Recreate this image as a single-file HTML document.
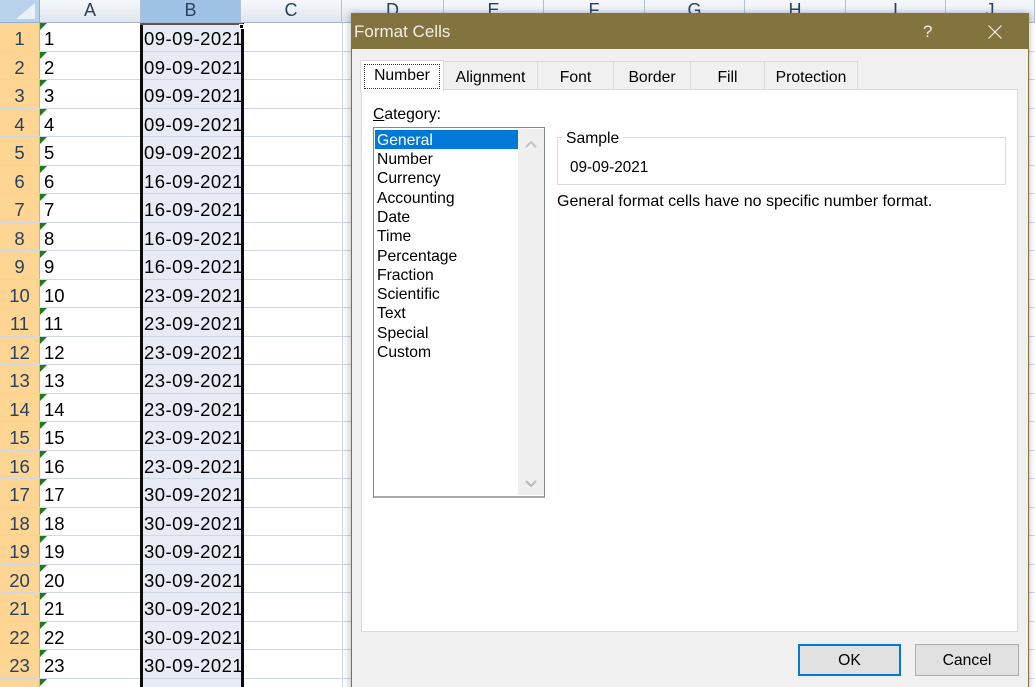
<!DOCTYPE html>
<html><head><meta charset="utf-8">
<style>
html,body{margin:0;padding:0;width:1035px;height:687px;overflow:hidden}
body{position:relative;background:#fff;font-family:"Liberation Sans",sans-serif;color:#000}
div{box-sizing:border-box}
#page{position:absolute;left:0;top:0;width:1035px;height:687px;overflow:hidden;background:#fff}
.abs,.t{position:absolute}
.t{white-space:nowrap;line-height:20px}
#corner{position:absolute;left:0;top:0;width:40px;height:23px;background:#b9d2ec;border-right:1px solid #8fb0d4;border-bottom:1px solid #8fb0d4}
.ch{position:absolute;top:0;height:23px;background:linear-gradient(#f6f8fb,#dfe5ee);border-right:1px solid #b3c0d2;border-bottom:1px solid #a6b5c9;text-align:center;font-size:18px;line-height:21px;color:#27415f}
#rows{position:absolute;left:0;top:23px;width:1035px}
.r{position:relative;height:28.52px;border-bottom:1px solid #d0d7e5;font-size:18.5px;line-height:32px;overflow:hidden}
.h{position:absolute;left:0;top:0;bottom:0;width:40px;background:#fed593;border-right:1px solid #f0a94e;text-align:center;color:#27415f;box-shadow:0 1px 0 #f0a94e}
.r::before{content:"";position:absolute;left:40px;top:0;border-top:7px solid #1e7b1e;border-right:7px solid transparent}
.a{position:absolute;left:44px;top:0;color:#000}
.b{position:absolute;left:141px;top:0;bottom:0;width:101px;background:#e8ebf6;padding-left:3px;letter-spacing:.45px;white-space:nowrap;overflow:visible}
.c{position:absolute;left:342px;top:0;bottom:0;border-left:1px solid #d0d7e5}
.vb{position:absolute;top:23px;width:3px;height:664px;background:#0c0c0c}
#dlg{position:absolute;left:351px;top:13px;width:678px;height:680px;background:#f0f0f0;border:1px solid #82733f;box-shadow:-2px 0 6px rgba(90,90,90,.3),2px 0 4px rgba(90,90,90,.2)}
#title{position:absolute;left:0;top:0;width:100%;height:35px;background:#82733f}
.tab{position:absolute;top:47px;height:30px;background:#f0f0f0;border:1px solid #dadada;border-bottom:none;text-align:center;font-size:15.7px;line-height:31px}
#panel{position:absolute;left:9px;top:75px;width:657px;height:543px;background:#fff;border:1px solid #dadada}
.li{position:absolute;left:25px;font-size:15.7px;line-height:20px;white-space:nowrap}
.btn{position:absolute;background:#e1e1e1;text-align:center;font-size:15.7px}
</style></head>
<body>
<div id="page">
<div id="corner"><svg width="39" height="22" style="position:absolute;left:0;top:0"><polygon points="35,3 35,19 16,19" fill="#e9f0f8"/></svg></div>
<div class="ch" style="left:40px;width:101px">A</div>
<div class="ch" style="left:141px;width:100px;background:#9fc1e6">B</div>
<div class="ch" style="left:241px;width:101px">C</div>
<div class="ch" style="left:342px;width:102px">D</div>
<div class="ch" style="left:444px;width:100px">E</div>
<div class="ch" style="left:544px;width:101px">F</div>
<div class="ch" style="left:645px;width:100px">G</div>
<div class="ch" style="left:745px;width:101px">H</div>
<div class="ch" style="left:846px;width:100px">I</div>
<div class="ch" style="left:946px;width:89px">J</div>

<div id="rows">
<div class="r"><div class="h">1</div><div class="a">1</div><div class="b">09-09-2021</div><div class="c"></div></div>
<div class="r"><div class="h">2</div><div class="a">2</div><div class="b">09-09-2021</div><div class="c"></div></div>
<div class="r"><div class="h">3</div><div class="a">3</div><div class="b">09-09-2021</div><div class="c"></div></div>
<div class="r"><div class="h">4</div><div class="a">4</div><div class="b">09-09-2021</div><div class="c"></div></div>
<div class="r"><div class="h">5</div><div class="a">5</div><div class="b">09-09-2021</div><div class="c"></div></div>
<div class="r"><div class="h">6</div><div class="a">6</div><div class="b">16-09-2021</div><div class="c"></div></div>
<div class="r"><div class="h">7</div><div class="a">7</div><div class="b">16-09-2021</div><div class="c"></div></div>
<div class="r"><div class="h">8</div><div class="a">8</div><div class="b">16-09-2021</div><div class="c"></div></div>
<div class="r"><div class="h">9</div><div class="a">9</div><div class="b">16-09-2021</div><div class="c"></div></div>
<div class="r"><div class="h">10</div><div class="a">10</div><div class="b">23-09-2021</div><div class="c"></div></div>
<div class="r"><div class="h">11</div><div class="a">11</div><div class="b">23-09-2021</div><div class="c"></div></div>
<div class="r"><div class="h">12</div><div class="a">12</div><div class="b">23-09-2021</div><div class="c"></div></div>
<div class="r"><div class="h">13</div><div class="a">13</div><div class="b">23-09-2021</div><div class="c"></div></div>
<div class="r"><div class="h">14</div><div class="a">14</div><div class="b">23-09-2021</div><div class="c"></div></div>
<div class="r"><div class="h">15</div><div class="a">15</div><div class="b">23-09-2021</div><div class="c"></div></div>
<div class="r"><div class="h">16</div><div class="a">16</div><div class="b">23-09-2021</div><div class="c"></div></div>
<div class="r"><div class="h">17</div><div class="a">17</div><div class="b">30-09-2021</div><div class="c"></div></div>
<div class="r"><div class="h">18</div><div class="a">18</div><div class="b">30-09-2021</div><div class="c"></div></div>
<div class="r"><div class="h">19</div><div class="a">19</div><div class="b">30-09-2021</div><div class="c"></div></div>
<div class="r"><div class="h">20</div><div class="a">20</div><div class="b">30-09-2021</div><div class="c"></div></div>
<div class="r"><div class="h">21</div><div class="a">21</div><div class="b">30-09-2021</div><div class="c"></div></div>
<div class="r"><div class="h">22</div><div class="a">22</div><div class="b">30-09-2021</div><div class="c"></div></div>
<div class="r"><div class="h">23</div><div class="a">23</div><div class="b">30-09-2021</div><div class="c"></div></div>
<div class="r"><div class="h"></div><div class="b"></div><div class="c"></div></div>
</div>
<div class="vb" style="left:140px"></div>
<div class="vb" style="left:241px"></div>
<div class="abs" style="left:140px;top:23px;width:103px;height:2px;background:#555"></div>
<div class="abs" style="left:239px;top:24px;width:5px;height:5px;background:#000;border:1px solid #fff"></div>

<div id="dlg">
<div id="title"></div>
<div class="t" style="left:2px;top:8px;font-size:17px;color:#f1efe6">Format Cells</div>
<div class="t" style="left:571px;top:8px;font-size:17px;color:#f1efe6">?</div>
<svg class="abs" style="left:635px;top:10px" width="16" height="16"><path d="M1.5 1.5L14.5 14.5M14.5 1.5L1.5 14.5" stroke="#f4f2ea" stroke-width="1.1" fill="none"/></svg>

<div class="tab" style="left:91px;width:95px">Alignment</div>
<div class="tab" style="left:185px;width:77px">Font</div>
<div class="tab" style="left:261px;width:78px">Border</div>
<div class="tab" style="left:338px;width:75px">Fill</div>
<div class="tab" style="left:412px;width:94px">Protection</div>
<div id="panel"></div>
<div class="tab" style="left:8px;top:46px;width:84px;height:32px;background:#fff;z-index:2;line-height:30px"><div class="abs" style="left:3px;top:3px;right:3px;bottom:3px;border:1px dotted #333"></div>Number</div>

<div class="t" style="left:21px;top:91px;font-size:15.7px"><u>C</u>ategory:</div>

<div class="abs" style="left:21px;top:113px;width:172px;height:371px;background:#fff;border:1px solid #828790;border-bottom:2px solid #a9a9b0"></div>
<div class="abs" style="left:23px;top:116px;width:143px;height:19px;background:#0078d7"></div>
<div class="abs" style="left:166px;top:115px;width:26px;height:366px;background:#efefef"></div>
<svg class="abs" style="left:173px;top:126px" width="12" height="8"><path d="M1 7L6 2L11 7" stroke="#c4c4c4" stroke-width="2" fill="none"/></svg>
<svg class="abs" style="left:173px;top:466px" width="12" height="8"><path d="M1 1L6 6L11 1" stroke="#b8b8b8" stroke-width="2" fill="none"/></svg>
<div class="li" style="top:117px;color:#fff">General</div>
<div class="li" style="top:136px">Number</div>
<div class="li" style="top:155px">Currency</div>
<div class="li" style="top:175px">Accounting</div>
<div class="li" style="top:194px">Date</div>
<div class="li" style="top:213px">Time</div>
<div class="li" style="top:233px">Percentage</div>
<div class="li" style="top:252px">Fraction</div>
<div class="li" style="top:271px">Scientific</div>
<div class="li" style="top:290px">Text</div>
<div class="li" style="top:310px">Special</div>
<div class="li" style="top:329px">Custom</div>

<div class="abs" style="left:205px;top:123px;width:449px;height:48px;border:1px solid #dcdcdc"></div>
<div class="t" style="left:210px;top:115px;font-size:15.7px;background:#fff;padding:0 4px">Sample</div>
<div class="t" style="left:218px;top:144px;font-size:15.3px">09-09-2021</div>
<div class="t" style="left:205px;top:178px;font-size:16px">General format cells have no specific number format.</div>

<div class="btn" style="left:446px;top:630px;width:103px;height:32px;border:2px solid #0078d7;line-height:30px">OK</div>
<div class="btn" style="left:563px;top:630px;width:104px;height:32px;border:1px solid #adadad;line-height:32px">Cancel</div>
</div>
</div>
</body></html>
